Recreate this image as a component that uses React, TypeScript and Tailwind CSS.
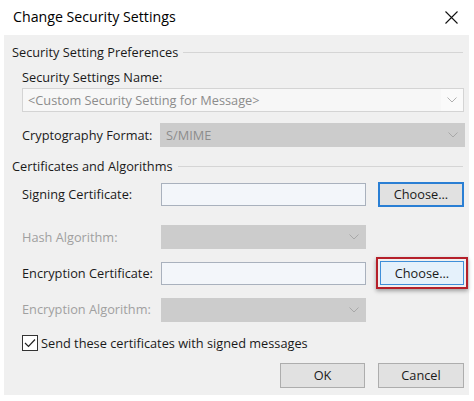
import React from "react";

const Chevron = ({ color = "#9a9a9a" }: { color?: string }) => (
  <svg width="10" height="6" viewBox="0 0 10 6" fill="none">
    <path d="M0.5 0.5 L5 5 L9.5 0.5" stroke={color} strokeWidth="1" />
  </svg>
);

const DisabledCombo = ({ w, text }: { w: string; text?: string }) => (
  <div className={`${w} shrink-0 h-[24px] bg-[#cccccc] flex items-center justify-between pl-[6px] pr-[7px]`}>
    <span className="text-[#8c8c8c]">{text ?? ""}</span>
    <Chevron color="#a8a8a8" />
  </div>
);

const Header = ({ title }: { title: string }) => (
  <div className="flex items-center h-[16px] pl-[8px] pr-[6px]">
    <span className="text-[#1a1a1a] whitespace-nowrap">{title}</span>
    <div className="flex-1 ml-[5px] h-px bg-[#d5d5d5]" />
  </div>
);

const Label = ({ children, dim }: { children: React.ReactNode; dim?: boolean }) => (
  <div className={`w-[157px] shrink-0 pl-[18px] whitespace-nowrap ${dim ? "text-[#a0a0a0]" : ""}`}>{children}</div>
);

export default function App() {
  return (
    <div
      className="w-[474px] h-[401px] bg-white overflow-hidden text-[12.75px] leading-none"
      style={{ fontFamily: '"Open Sans", "Noto Sans", sans-serif' }}
    >
      <div className="h-[35px] flex items-center justify-between pl-[13px] pr-[16px]">
        <span className="text-[14.2px] text-black">Change Security Settings</span>
        <svg width="13" height="13" viewBox="0 0 13 13">
          <path d="M0.5 0.5 L12.5 12.5 M12.5 0.5 L0.5 12.5" stroke="#111" strokeWidth="1.1" />
        </svg>
      </div>
      <div className="ml-[4px] w-[465px] h-[360px] bg-[#f0f0f0] flex flex-col text-[#1a1a1a]">
        <div className="mt-[9px]">
          <Header title="Security Setting Preferences" />
        </div>
        <div className="mt-[9px] h-[16px] pl-[18px] flex items-center">Security Settings Name:</div>
        <div className="mt-[3px] ml-[18px] w-[442px] h-[24px] border border-[#d4d4d4] bg-[#f7f7f7] flex items-stretch">
          <div className="flex-1 flex items-center pl-[5px] text-[#8c8c8c]">
            &lt;Custom Security Setting for Message&gt;
          </div>
          <div className="w-[22px] bg-[#fafafa] flex items-center justify-center">
            <Chevron color="#b0b0b0" />
          </div>
        </div>
        <div className="mt-[11px] h-[24px] flex items-center">
          <div className="w-[156px] shrink-0 pl-[18px] whitespace-nowrap">Cryptography Format:</div>
          <DisabledCombo w="w-[305px]" text="S/MIME" />
        </div>
        <div className="mt-[11px]">
          <Header title="Certificates and Algorithms" />
        </div>
        <div className="mt-[8px] h-[25px] flex items-center">
          <Label>Signing Certificate:</Label>
          <div className="w-[205px] shrink-0 h-[23px] border border-[#a9b1bd] bg-[#f3f6fa]" />
          <button className="ml-[12px] shrink-0 w-[86px] h-[25px] border-2 border-[#2a7fd4] bg-[#e1e1e1] text-[#1a1a1a] text-[12.75px]">
            Choose...
          </button>
        </div>
        <div className="mt-[18px] h-[24px] flex items-center">
          <Label dim>Hash Algorithm:</Label>
          <DisabledCombo w="w-[205px]" />
        </div>
        <div className="mt-[12px] h-[24px] flex items-center">
          <Label>Encryption Certificate:</Label>
          <div className="w-[205px] shrink-0 h-[23px] border border-[#a9b1bd] bg-[#f3f6fa]" />
          <div className="ml-[10px] shrink-0 p-[2px] border-2 border-[#b5202a] shadow-[0_2px_4px_rgba(0,0,0,0.35)]">
            <button className="block w-[84px] h-[24px] border border-[#3f8fd9] bg-[#e5f1fb] text-[#1a1a1a] text-[12.75px]">
              Choose...
            </button>
          </div>
        </div>
        <div className="mt-[12px] h-[25px] flex items-center">
          <Label dim>Encryption Algorithm:</Label>
          <DisabledCombo w="w-[205px]" />
        </div>
        <div className="mt-[13px] h-[16px] flex items-center pl-[18px]">
          <div className="w-[16px] h-[16px] shrink-0 border border-[#333] bg-white flex items-center justify-center">
            <svg width="12" height="10" viewBox="0 0 12 10">
              <path d="M1 5 L4.5 8.5 L11 1.5" stroke="#222" strokeWidth="1.2" fill="none" />
            </svg>
          </div>
          <span className="ml-[3px] whitespace-nowrap">Send these certificates with signed messages</span>
        </div>
        <div className="mt-[12px] flex justify-end pr-[5px] gap-[13px]">
          <button className="w-[85px] h-[25px] border border-[#adadad] bg-[#e1e1e1] text-[12.75px] text-[#1a1a1a]">OK</button>
          <button className="w-[86px] h-[25px] border border-[#adadad] bg-[#e1e1e1] text-[12.75px] text-[#1a1a1a]">Cancel</button>
        </div>
      </div>
    </div>
  );
}
